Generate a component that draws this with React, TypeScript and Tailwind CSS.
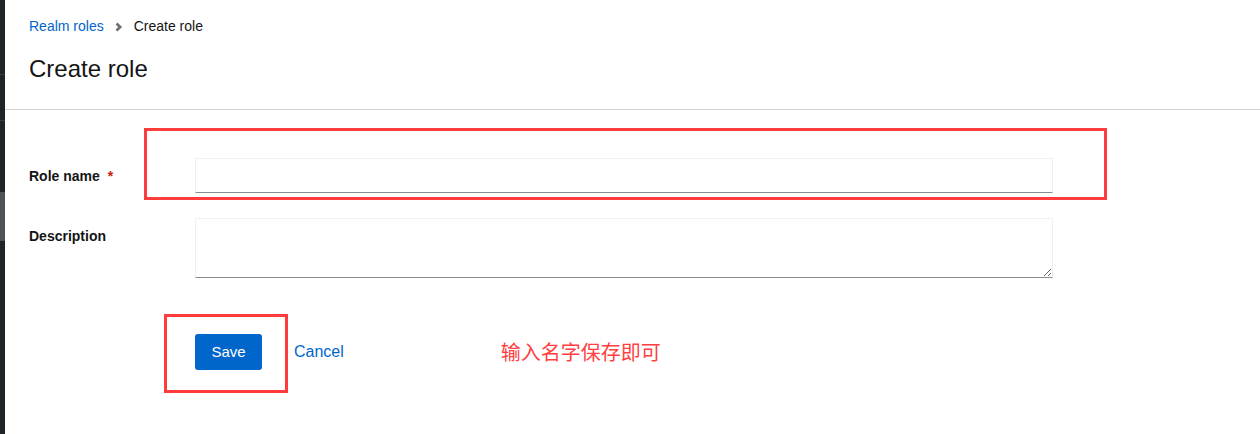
export default function App() {
  return (
    <div
      className="relative flex h-[434px] w-[1260px] overflow-hidden bg-white text-[#151515]"
      style={{ fontFamily: '"Liberation Sans", "Noto Sans CJK SC", sans-serif' }}
    >
      {/* dark sidebar edge */}
      <div className="flex w-[5px] shrink-0 flex-col bg-[#212427]">
        <div className="h-[74px]" />
        <div className="h-px bg-[#3c3f42]" />
        <div className="h-[45px]" />
        <div className="h-px bg-[#3c3f42]" />
        <div className="h-[71px]" />
        <div className="h-[49px] bg-[#4f5255]" />
      </div>

      <main className="flex-1">
        <section className="px-6 pt-[16px] pb-[22px]">
          <nav className="flex items-center text-[14px] leading-[21px]">
            <span className="text-[#0066cc]">Realm roles</span>
            <svg viewBox="0 0 10 10" className="mx-[10px] h-[10px] w-[10px]" fill="none" stroke="#6a6e73" strokeWidth="2.6">
              <path d="M2.5 1.5 L6.2 5 L2.5 8.5" />
            </svg>
            <span>Create role</span>
          </nav>
          <h1 className="mt-[14px] text-[24px] leading-[36px]">Create role</h1>
        </section>
        <div className="h-px bg-[#d2d2d2]" />

        <form className="px-6 pt-[48px]">
          <div className="flex items-start">
            <label className="w-[166px] pt-[8px] text-[14px] leading-[21px] font-bold">
              Role name <span className="ml-1 text-[#c9190b]">*</span>
            </label>
            <input
              className="h-[35px] w-[858px] border border-[#f0f0f0] border-b-[#8a8d90] px-2 text-[14px] outline-none"
              type="text"
            />
          </div>
          <div className="mt-[25px] flex items-start">
            <label className="w-[166px] pt-[8px] text-[14px] leading-[21px] font-bold">
              Description
            </label>
            <textarea className="h-[60px] w-[858px] border border-[#f0f0f0] border-b-[#8a8d90] px-2 text-[14px] outline-none" />
          </div>
          <div className="mt-[56px] flex items-center pl-[166px]">
            <button
              type="button"
              className="h-[36px] w-[67px] rounded-[3px] bg-[#0066cc] text-[15px] text-white"
            >
              Save
            </button>
            <span className="ml-[32px] text-[16px] text-[#0066cc]">Cancel</span>
            <span
              className="ml-[157px] text-[20px] text-[#ff4040]"
              style={{ fontFamily: '"Noto Sans CJK SC", sans-serif' }}
            >
              输入名字保存即可
            </span>
          </div>
        </form>
      </main>

      {/* annotation boxes */}
      <div className="absolute left-[144px] top-[128px] h-[72px] w-[963px] border-[3px] border-[#ff3b3b]" />
      <div className="absolute left-[164px] top-[314px] h-[79px] w-[124px] border-[3px] border-[#ff3b3b]" />
    </div>
  );
}
